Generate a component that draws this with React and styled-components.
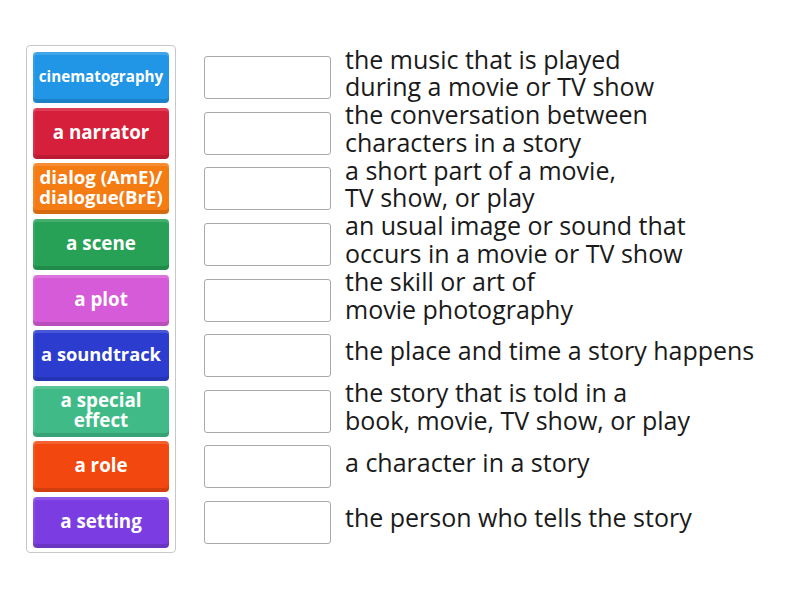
import React from 'react'
import styled, { createGlobalStyle } from 'styled-components'

const GlobalStyle = createGlobalStyle`
  body {
    margin: 0;
    background: #fff;
    font-family: "Open Sans", "Liberation Sans", sans-serif;
  }
`

// tile text is shrunk to fit, like the original game does
const tiles = [
  { label: 'cinematography', color: '#2196e6', size: 15.2 },
  { label: 'a narrator', color: '#d61f3a' },
  { label: 'dialog (AmE)/\ndialogue(BrE)', color: '#f57b13', size: 18.6 },
  { label: 'a scene', color: '#27a155' },
  { label: 'a plot', color: '#d65bd8' },
  { label: 'a soundtrack', color: '#2b3ccf', size: 18.3 },
  { label: 'a special\neffect', color: '#40bb87' },
  { label: 'a role', color: '#f2480f' },
  { label: 'a setting', color: '#7b3de2' },
]

const definitions = [
  'the music that is played\nduring a movie or TV show',
  'the conversation between\ncharacters in a story',
  'a short part of a movie,\nTV show, or play',
  'an usual image or sound that\noccurs in a movie or TV show',
  'the skill or art of\nmovie photography',
  'the place and time a story happens',
  'the story that is told in a\nbook, movie, TV show, or play',
  'a character in a story',
  'the person who tells the story',
]

function App() {
  return (
    <>
      <GlobalStyle />
      <Page>
        <TilePanel>
          {tiles.map((t) => (
            <Tile key={t.label} $color={t.color} $size={t.size}>{t.label}</Tile>
          ))}
        </TilePanel>
        <Targets>
          {definitions.map((d) => (
            <TargetRow key={d}>
              <DropBox />
              <Definition>{d}</Definition>
            </TargetRow>
          ))}
        </Targets>
      </Page>
    </>
  )
}

const Page = styled.div`
  display: flex;
  align-items: flex-start;
  padding: 45px 0 0 26px;
  width: 800px;
  height: 600px;
  box-sizing: border-box;
`

const TilePanel = styled.div`
  width: 150px;
  box-sizing: border-box;
  border: 1px solid #c8c8c8;
  border-radius: 4px;
  padding: 6px 6px 4px 6px;
  display: flex;
  flex-direction: column;
  gap: 4.625px;
`

const Tile = styled.div`
  height: 51px;
  box-sizing: border-box;
  border-radius: 4px;
  background: ${(p) => p.$color};
  box-shadow:
    inset 0 -4px 0 rgba(0, 0, 0, 0.13),
    inset 0 3px 0 rgba(255, 255, 255, 0.14),
    inset 2px 0 0 rgba(255, 255, 255, 0.08);
  color: #fff;
  font-weight: 700;
  font-size: ${(p) => p.$size || 18.8}px;
  line-height: 20px;
  white-space: pre-line;
  text-align: center;
  display: flex;
  align-items: center;
  justify-content: center;
  padding-bottom: 3px;
`

const Targets = styled.div`
  margin-left: 28px;
  padding-top: 7px;
  display: flex;
  flex-direction: column;
  gap: 4.625px;
`

const TargetRow = styled.div`
  height: 51px;
  display: flex;
  align-items: center;
  gap: 14px;
`

const DropBox = styled.div`
  width: 127px;
  height: 43px;
  box-sizing: border-box;
  border: 1px solid #a9a9a9;
  border-radius: 3px;
  background: #fff;
  flex-shrink: 0;
`

const Definition = styled.div`
  font-size: 25px;
  line-height: 27.5px;
  color: #1a1a1a;
  white-space: pre-line;
  margin-top: -9px;
`

export default App
